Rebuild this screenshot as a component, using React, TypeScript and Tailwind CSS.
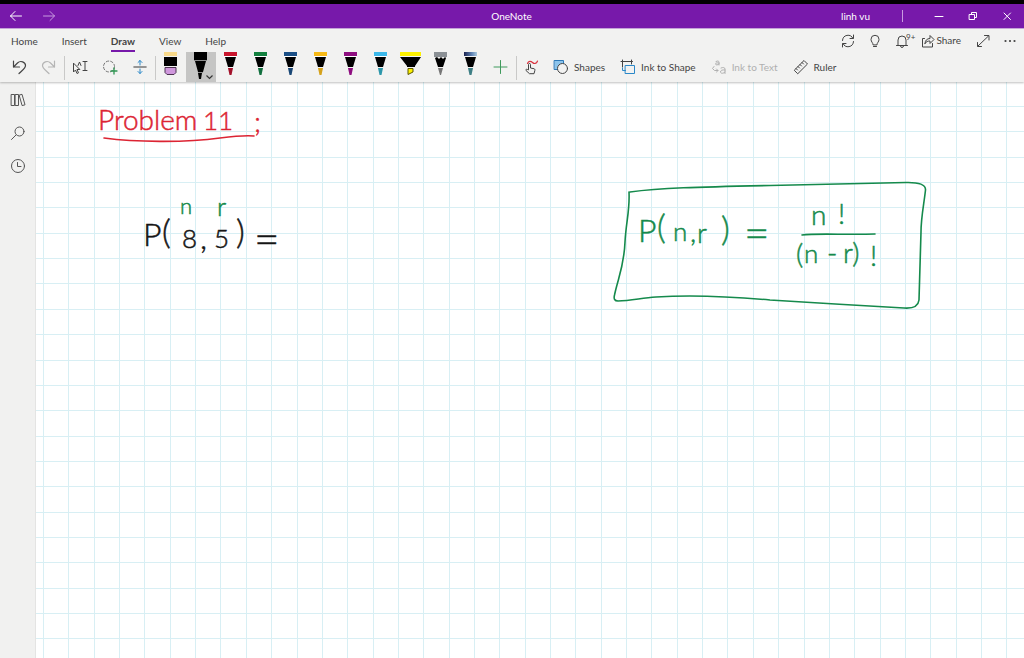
import React, { useState } from 'react';
import clsx from 'clsx';

type IconProps = { children: React.ReactNode; className?: string; width?: number };

const Icon = ({ children, className, width = 16 }: IconProps) => (
  <svg
    width={width} height={16} viewBox={`0 0 ${width} 16`} fill="none" stroke="currentColor"
    strokeLinecap="round" strokeLinejoin="round" aria-hidden="true"
    className={clsx('shrink-0', className)}
  >
    {children}
  </svg>
);

const TABS = ['Home', 'Insert', 'Draw', 'View', 'Help'];

const PENS = [
  { name: 'Red pen', cap: '#c8152d', tip: '#a3132b' },
  { name: 'Green pen', cap: '#13803f', tip: '#13703f' },
  { name: 'Blue pen', cap: '#1b4f86', tip: '#1b4876' },
  { name: 'Yellow pen', cap: '#f7b916', tip: '#d5a21c' },
  { name: 'Purple pen', cap: '#8e0f80', tip: '#8e0f80' },
  { name: 'Light blue pen', cap: '#3cb8ea', tip: '#2d97ab' },
];

const Pen = ({ cap, tip }: { cap: string; tip: string }) => (
  <svg width="30" height="30" viewBox="0 0 30 30" aria-hidden="true">
    <path d="M8 0h13v4H8z" fill={cap} />
    <path d="M8 4h13v1H8z" fill="#fff" />
    <path d="M9 5h11l-3 10h-5z" fill="#000" />
    <path d="M12 16h5l-1.500 7h-2z" fill={tip} />
  </svg>
);

const Eraser = () => (
  <svg width="30" height="30" viewBox="0 0 30 30" aria-hidden="true">
    <path d="M8 0h13v4H8z" fill="#f8d98a" />
    <path d="M8 5h13v9H8z" fill="#000" />
    <path d="M9 15.500h11v5l-2 2h-7l-2-2z" fill="#cf97dc" stroke="#4b3350" />
  </svg>
);

const ActivePen = () => (
  <svg width="30" height="30" viewBox="0 0 30 30" aria-hidden="true">
    <path d="M8 0h13v8H8zM9 9h11l-3 11h-5zM12 21h4l-1 6h-2z" fill="#000" />
    <path d="M8 8.500h13M12 20.500h5" stroke="#8c8c8c" />
    <path d="M20.500 23.500l3 3 3-3" fill="none" stroke="#333" strokeWidth="1.200" />
  </svg>
);

const Highlighter = () => (
  <svg width="30" height="30" viewBox="0 0 30 30" aria-hidden="true">
    <path d="M4 0h21v4H4z" fill="#fdf100" />
    <path d="M4 5h21l-6 9v1h-8v-1z" fill="#000" />
    <path d="M12 16.500h5v3.500l-5 2.500z" fill="#fdf100" stroke="#5b5700" />
  </svg>
);

const Pencil = () => (
  <svg width="30" height="30" viewBox="0 0 30 30" aria-hidden="true">
    <path d="M8 0h13v5H8z" fill="#8b9095" />
    <path d="M9 6l2-1 2 2 2-2 2 2 2-2 1 1-3 9h-5z" fill="#000" />
    <path d="M12 16h5l-2 7h-1z" fill="#777" />
  </svg>
);

const GalaxyPen = () => (
  <svg width="30" height="30" viewBox="0 0 30 30" aria-hidden="true">
    <defs>
      <linearGradient id="galaxy">
        <stop offset="0" stopColor="#1b2350" />
        <stop offset="0.600" stopColor="#5f83b4" />
        <stop offset="1" stopColor="#a9c8dc" />
      </linearGradient>
    </defs>
    <path d="M8 0h13v4H8z" fill="url(#galaxy)" />
    <path d="M9 5h11l-3 10h-5z" fill="#000" />
    <path d="M12 16h5l-1.500 7h-2z" fill="#3f7f85" />
  </svg>
);

const Divider = () => <span className="mt-1 h-6 w-px shrink-0 bg-[#c9c9c8]" />;

const ToolButton = ({ label, active, top, children }: {
  label: string; active?: boolean; top?: boolean; children: React.ReactNode;
}) => (
  <button
    type="button" aria-label={label} aria-pressed={active}
    className={clsx('flex h-[30px] w-[30px] shrink-0 justify-center', top ? 'items-start' : 'items-center', active && 'bg-[#c5c5c4]')}
  >
    {children}
  </button>
);

const TitleBar = () => (
  <header className="flex h-[25px] shrink-0 items-center border-b border-[#c9a5dc] bg-[#7719aa] text-white">
    <div className="flex flex-1 items-center gap-[17px] pl-2">
      <button type="button" aria-label="Back"><Icon><path d="M13.500 8h-11M7 3.500L2.500 8 7 12.500" /></Icon></button>
      <button type="button" aria-label="Forward" className="text-[#c99be0]"><Icon><path d="M2.500 8h11M9 3.500L13.500 8 9 12.500" /></Icon></button>
    </div>
    <h1 className="text-[10px]">OneNote</h1>
    <div className="flex flex-1 items-center justify-end pr-[9px]">
      <span className="text-[10px]">linh vu</span>
      <span className="ml-8 h-3 w-px bg-[#c99be0]" />
      <div className="ml-7 flex gap-[18px]">
        <button type="button" aria-label="Minimize"><Icon><path d="M4 8.500h8" /></Icon></button>
        <button type="button" aria-label="Restore"><Icon><path d="M4.500 6.500h5v5h-5zM6.500 6.500v-2h5v5h-2" /></Icon></button>
        <button type="button" aria-label="Close"><Icon><path d="M5 5l6.500 6.500M11.500 5L5 11.500" /></Icon></button>
      </div>
    </div>
  </header>
);

const TabRow = () => {
  const [tab, setTab] = useState('Draw');
  return (
    <div className="flex h-[23px] items-center justify-between pr-1.5">
      <nav className="flex gap-6 pl-[11px]">
        {TABS.map(t => (
          <button
            key={t} type="button" onClick={() => setTab(t)}
            className={clsx('relative h-[23px] pt-0.5 text-[10px]', t === tab && 'font-bold')}
          >
            {t}
            {t === tab && <span className="absolute inset-x-0 bottom-0 h-[2px] bg-[#7719aa]" />}
          </button>
        ))}
      </nav>
      <div className="flex items-center text-[#444]">
        <button type="button" aria-label="Sync">
          <Icon>
            <path d="M2.500 7.500a5.500 5.500 0 0 1 10.500-2M13.500 8.500a5.500 5.500 0 0 1-10.500 2M13.500 2v3.500H10M2.500 14v-3.500H6" />
          </Icon>
        </button>
        <button type="button" aria-label="Tell me" className="ml-[11px]">
          <Icon><path d="M6 11.500c0-2-2-2.500-2-5.200a4 4 0 0 1 8 0c0 2.700-2 3.200-2 5.200zM6.500 13.500h3" /></Icon>
        </button>
        <button type="button" aria-label="Notifications" className="ml-[11px] flex items-start">
          <Icon><path d="M2.500 12.500h11M4 12.500V7a4 4 0 0 1 8 0v5.500M6.500 13a1.500 1.500 0 0 0 3 0" /></Icon>
          <span className="-ml-1 text-[8px] leading-none">9+</span>
        </button>
        <button type="button" className="ml-[5px] flex items-center text-[10px]">
          <Icon><path d="M4.500 5.500h-2v8.500h10v-3.500M5 10.500c0-3 2-5 5-5V2.500l4 4-4 4V8c-2 0-4 .500-5 2.500z" /></Icon>
          Share
        </button>
        <button type="button" aria-label="Full screen" className="ml-[14px]">
          <Icon><path d="M3 13L13.500 3M9.500 2.500H14V7M2.500 9.500V13.500H6.500" /></Icon>
        </button>
        <button type="button" aria-label="More" className="ml-[11px]">
          <Icon><path d="M3.500 8h.01M8 8h.01M12.500 8h.01" strokeWidth="2.200" /></Icon>
        </button>
      </div>
    </div>
  );
};

const DrawTools = () => (
  <div className="flex h-[30px] pl-1">
    <ToolButton label="Undo"><Icon><path d="M2.500 2v6h6M2.500 8l4-4c3-3 8-1 8 2.500 0 3-3 4.500-6.500 8" strokeWidth="1.200" /></Icon></ToolButton>
    <ToolButton label="Redo"><Icon className="text-[#b5b5b5]"><path d="M13.500 2v6h-6M13.500 8l-4-4c-3-3-8-1-8 2.500 0 3 3 4.500 6.500 8" strokeWidth="1.200" /></Icon></ToolButton>
    <Divider />
    <ToolButton label="Select or type">
      <Icon>
        <path d="M1.500 4.500v8.500l2-2 1.500 3.500 1.500-.700L5 10.500h2.500z" />
        <path d="M6 6.500L7.500 3 9 6.500M11 2.500h4M13 2.500v9M11 11.500h4" />
      </Icon>
    </ToolButton>
    <ToolButton label="Lasso select">
      <Icon>
        <circle cx="7" cy="7.500" r="5.500" strokeDasharray="2.500 2" stroke="#777" />
        <path d="M12 9v6M9 12h6" stroke="#2f9552" strokeWidth="1.300" />
      </Icon>
    </ToolButton>
    <ToolButton label="Insert or remove space">
      <Icon>
        <path d="M2 8h12" stroke="#777" strokeWidth="1.600" />
        <path d="M8 6V1.500M6 3.500l2-2 2 2M8 10v4.500M6 12.500l2 2 2-2" stroke="#2b88c8" />
      </Icon>
    </ToolButton>
    <Divider />
    <ToolButton label="Eraser" top><Eraser /></ToolButton>
    <ToolButton label="Black pen" top active><ActivePen /></ToolButton>
    {PENS.map(p => (
      <ToolButton key={p.name} label={p.name} top><Pen cap={p.cap} tip={p.tip} /></ToolButton>
    ))}
    <ToolButton label="Highlighter" top><Highlighter /></ToolButton>
    <ToolButton label="Pencil" top><Pencil /></ToolButton>
    <ToolButton label="Galaxy pen" top><GalaxyPen /></ToolButton>
    <ToolButton label="Add pen"><Icon><path d="M7.500 1.500v13M1 8h13" stroke="#3f9a5c" /></Icon></ToolButton>
    <Divider />
    <ToolButton label="Draw with touch">
      <Icon>
        <path d="M4.500 10.500V5.500a1 1 0 0 1 2 0v3.500l3.500.700c1 .300 1 1 .800 2l-.800 3H5.500L2 11.500c-.500-1 .500-1.800 1.300-1.200z" />
        <path d="M3.500 4.500c1-3 3.500-2.500 5-1s4 1.500 5-1.500" stroke="#d8333f" strokeWidth="1.200" />
      </Icon>
    </ToolButton>
    <div className="ml-[6px] flex items-center gap-[15px] text-[10px]">
      <button type="button" className="flex items-center gap-[5px]">
        <Icon>
          <path d="M1.500 1.500h9v9h-9z" fill="#8cc4ec" stroke="#2b78b8" />
          <circle cx="9.500" cy="9.500" r="5" fill="#f2f2f1" />
        </Icon>
        Shapes
      </button>
      <button type="button" className="flex items-center gap-[5px]">
        <Icon>
          <path d="M1 2.500h11.500M2.500 1v7M11.500 1v4" />
          <path d="M5.500 6.500h9v8h-9zM2.500 9v2.500h3" stroke="#2b88c8" />
        </Icon>
        Ink to Shape
      </button>
      <button type="button" disabled className="flex items-center gap-[5px] text-[#b0b0b0]">
        <Icon>
          <path d="M5 2.500c2-1 3-.500 3 1V6M8 4c-2-.500-3.500 0-3.500 1s2 1.500 3.500 0" />
          <path d="M10 9c2-1 4-.500 4 1v4.500M14 11c-3-.500-4.500.500-4.500 2s3 2 4.500 0M3 7.500l-1.500 2 2 2H7M5.500 10L7 11.500 5.500 13" />
        </Icon>
        Ink to Text
      </button>
      <button type="button" className="flex items-center gap-[5px]">
        <Icon><path d="M1.500 11L11 1.500 14.500 5 5 14.500zM9 3.500l1.500 1.500M7 5.500L8.500 7M5 7.500L6.500 9M3 9.500L4.500 11" /></Icon>
        Ruler
      </button>
    </div>
  </div>
);

const SideBar = () => (
  <aside className="flex w-9 shrink-0 flex-col items-center gap-[17px] border-r border-[#e4e4e3] bg-[#f1f1f0] pt-[10px] text-[#555]">
    <button type="button" aria-label="Notebooks">
      <Icon><path d="M1.500 2.500h3v11h-3zM5.500 2.500h3v11h-3zM9.500 3l2.500-.700 3 10.500-2.500.700z" /></Icon>
    </button>
    <button type="button" aria-label="Search">
      <Icon><circle cx="9.500" cy="6.500" r="4.500" /><path d="M6 10l-4.500 4.500" /></Icon>
    </button>
    <button type="button" aria-label="Recent notes">
      <Icon><circle cx="8" cy="8" r="6.500" /><path d="M7.500 4.500v4h3.500" /></Icon>
    </button>
  </aside>
);

const RED = '#dc2433';
const GREEN = '#158a4c';
const BLACK = '#151515';

// handwriting: x, baseline, size, colour
const NOTES: { text: string; x: number; y: number; size: number; color: string }[] = [
  { text: 'Problem', x: 62, y: 48, size: 28, color: RED },
  { text: '11', x: 167, y: 48, size: 26, color: RED },
  { text: ';', x: 218, y: 50, size: 28, color: RED },
  { text: 'n', x: 144, y: 132, size: 22, color: GREEN },
  { text: 'r', x: 181, y: 134, size: 26, color: GREEN },
  { text: 'P', x: 107, y: 164, size: 32, color: BLACK },
  { text: '(', x: 126, y: 162, size: 34, color: BLACK },
  { text: '8', x: 146, y: 166, size: 26, color: BLACK },
  { text: ',', x: 164, y: 167, size: 32, color: BLACK },
  { text: '5', x: 178, y: 166, size: 26, color: BLACK },
  { text: ')', x: 200, y: 162, size: 34, color: BLACK },
  { text: '=', x: 218, y: 173, size: 44, color: BLACK },
  { text: 'P', x: 602, y: 160, size: 32, color: GREEN },
  { text: '(', x: 621, y: 157, size: 34, color: GREEN },
  { text: 'n', x: 637, y: 159, size: 26, color: GREEN },
  { text: ',', x: 654, y: 160, size: 28, color: GREEN },
  { text: 'r', x: 661, y: 161, size: 28, color: GREEN },
  { text: ')', x: 685, y: 159, size: 34, color: GREEN },
  { text: '=', x: 708, y: 167, size: 44, color: GREEN },
  { text: 'n', x: 775, y: 143, size: 28, color: GREEN },
  { text: '!', x: 802, y: 142, size: 28, color: GREEN },
  { text: '(', x: 760, y: 182, size: 28, color: GREEN },
  { text: 'n', x: 768, y: 181, size: 26, color: GREEN },
  { text: '-', x: 791, y: 181, size: 28, color: GREEN },
  { text: 'r)', x: 807, y: 181, size: 28, color: GREEN },
  { text: '!', x: 834, y: 184, size: 28, color: GREEN },
];

const GRID = 25.35;

const Page = () => (
  <main className="relative min-w-0 flex-1 overflow-hidden bg-white">
    <svg className="absolute inset-0 h-full w-full" role="img" aria-label="Notes page">
      <g stroke="#d8eff4" shapeRendering="crispEdges">
        {Array.from({ length: 100 }, (_, i) => {
          const x = Math.round(7 + i * GRID) + 0.5;
          return <line key={i} x1={x} x2={x} y1="0" y2="100%" />;
        })}
        {Array.from({ length: 60 }, (_, i) => {
          const y = Math.round(24 + i * GRID) + 0.5;
          return <line key={i} x1="0" x2="100%" y1={y} y2={y} />;
        })}
      </g>
      <g fill="none" strokeWidth="1.600" strokeLinecap="round" strokeLinejoin="round">
        <path d="M68 56C98 60 148 61 184 56C200 54 208 53 218 54" stroke={RED} />
        <path
          d="M594 110C624 106 660 105 734 103.500C800 102 840 101 870 100.500Q890 100 889.500 108C888 122 885 135 885 150L883 218Q882 227 868 226C830 224 770 220 734 218C690 214 650 213 620 215C605 216 595 219 582 219Q577 219 578.500 213C582 196 588 185 589 160C590 140 594 128 593 110"
          stroke={GREEN}
        />
        <path d="M766 153C780 151 810 153 839 152" stroke={GREEN} />
      </g>
      {NOTES.map((n, i) => (
        <text
          key={i} x={n.x} y={n.y} fontSize={n.size} fill={n.color} stroke={n.color} strokeWidth="0.500"
          className="font-[Lato,sans-serif] font-light"
        >
          {n.text}
        </text>
      ))}
    </svg>
  </main>
);

export default function App() {
  return (
    <div className="flex h-screen flex-col overflow-hidden border-t-4 border-black bg-[#f2f2f1] font-[Lato,'Open_Sans',sans-serif] text-[#444]">
      <TitleBar />
      <div className="z-10 shrink-0 shadow-[0_1px_2px_rgba(0,0,0,0.25)]">
        <TabRow />
        <DrawTools />
      </div>
      <div className="flex min-h-0 flex-1">
        <SideBar />
        <Page />
      </div>
    </div>
  );
}
